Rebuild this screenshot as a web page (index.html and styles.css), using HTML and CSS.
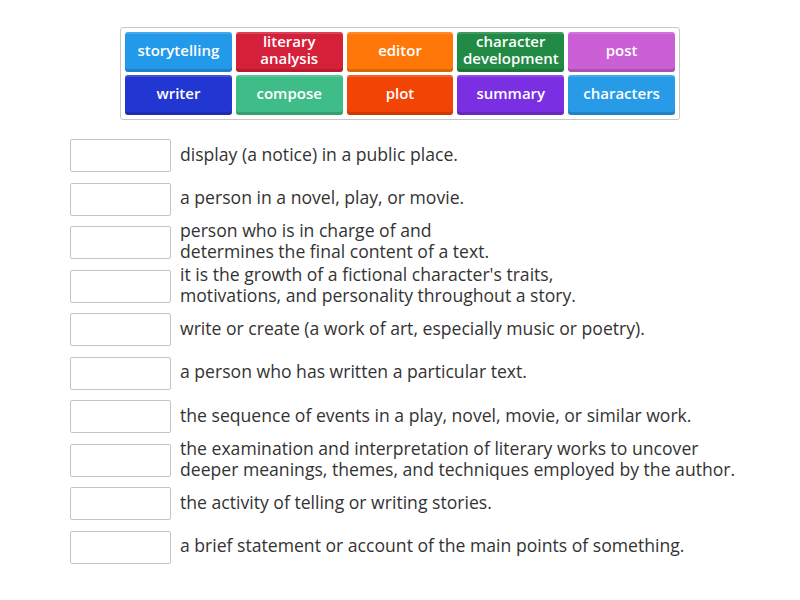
FILE: index.html
```html
<!DOCTYPE html>
<html lang="en">
<head>
    <meta charset="UTF-8">
    <title>Match up</title>
    <link rel="stylesheet" href="styles.css">
</head>
<body>
    <div class="bank">
        <div class="tile blue">storytelling</div>
        <div class="tile red">literary<br>analysis</div>
        <div class="tile orange">editor</div>
        <div class="tile green">character<br>development</div>
        <div class="tile pink">post</div>
        <div class="tile navy">writer</div>
        <div class="tile mint">compose</div>
        <div class="tile tomato">plot</div>
        <div class="tile violet">summary</div>
        <div class="tile sky">characters</div>
    </div>

    <div class="rows">
        <div class="row"><div class="slot"></div><div class="clue">display (a notice) in a public place.</div></div>
        <div class="row"><div class="slot"></div><div class="clue">a person in a novel, play, or movie.</div></div>
        <div class="row"><div class="slot"></div><div class="clue">person who is in charge of and<br>determines the final content of a text.</div></div>
        <div class="row"><div class="slot"></div><div class="clue">it is the growth of a fictional character's traits,<br>motivations, and personality throughout a story.</div></div>
        <div class="row"><div class="slot"></div><div class="clue">write or create (a work of art, especially music or poetry).</div></div>
        <div class="row"><div class="slot"></div><div class="clue">a person who has written a particular text.</div></div>
        <div class="row"><div class="slot"></div><div class="clue">the sequence of events in a play, novel, movie, or similar work.</div></div>
        <div class="row"><div class="slot"></div><div class="clue">the examination and interpretation of literary works to uncover<br>deeper meanings, themes, and techniques employed by the author.</div></div>
        <div class="row"><div class="slot"></div><div class="clue">the activity of telling or writing stories.</div></div>
        <div class="row"><div class="slot"></div><div class="clue">a brief statement or account of the main points of something.</div></div>
    </div>
</body>
</html>
```
FILE: styles.css
```css
body {
    margin: 0;
    font-family: "Open Sans", "Liberation Sans", sans-serif;
    background-color: white;
    color: #333;
}
.bank {
    width: 550px;
    margin: 27px auto 0;
    padding: 4px;
    border: 1px solid #c8c8c8;
    border-radius: 3px;
    display: grid;
    grid-template-columns: repeat(5, 1fr);
    gap: 3px 4px;
}
.tile {
    height: 40px;
    box-sizing: border-box;
    padding-bottom: 4px;
    border-radius: 3px;
    display: flex;
    align-items: center;
    justify-content: center;
    text-align: center;
    color: white;
    font-weight: 600;
    font-size: 15px;
    line-height: 17px;
    box-shadow: inset 0 -3px 0 rgba(0,0,0,0.15), inset 0 2px 0 rgba(255,255,255,0.15);
}
.blue { background-color: #2399e9; }
.red { background-color: #d5203a; }
.orange { background-color: #ff7708; }
.green { background-color: #218a45; }
.pink { background-color: #cb5fd6; }
.navy { background-color: #2236d2; }
.mint { background-color: #3fbd88; }
.tomato { background-color: #f24405; }
.violet { background-color: #7a2fe2; }
.sky { background-color: #279be8; }

.rows {
    margin: 19px 0 0 70px;
    display: flex;
    flex-direction: column;
    gap: 10.5px;
}
.row {
    height: 33px;
    display: flex;
    align-items: center;
    gap: 9px;
}
.slot {
    width: 99px;
    height: 31px;
    flex-shrink: 0;
    border: 1px solid #c4c4c4;
    border-radius: 2px;
    background-color: white;
}
.clue {
    font-size: 17.6px;
    line-height: 21px;
    padding-bottom: 3px;
    white-space: nowrap;
}
```
